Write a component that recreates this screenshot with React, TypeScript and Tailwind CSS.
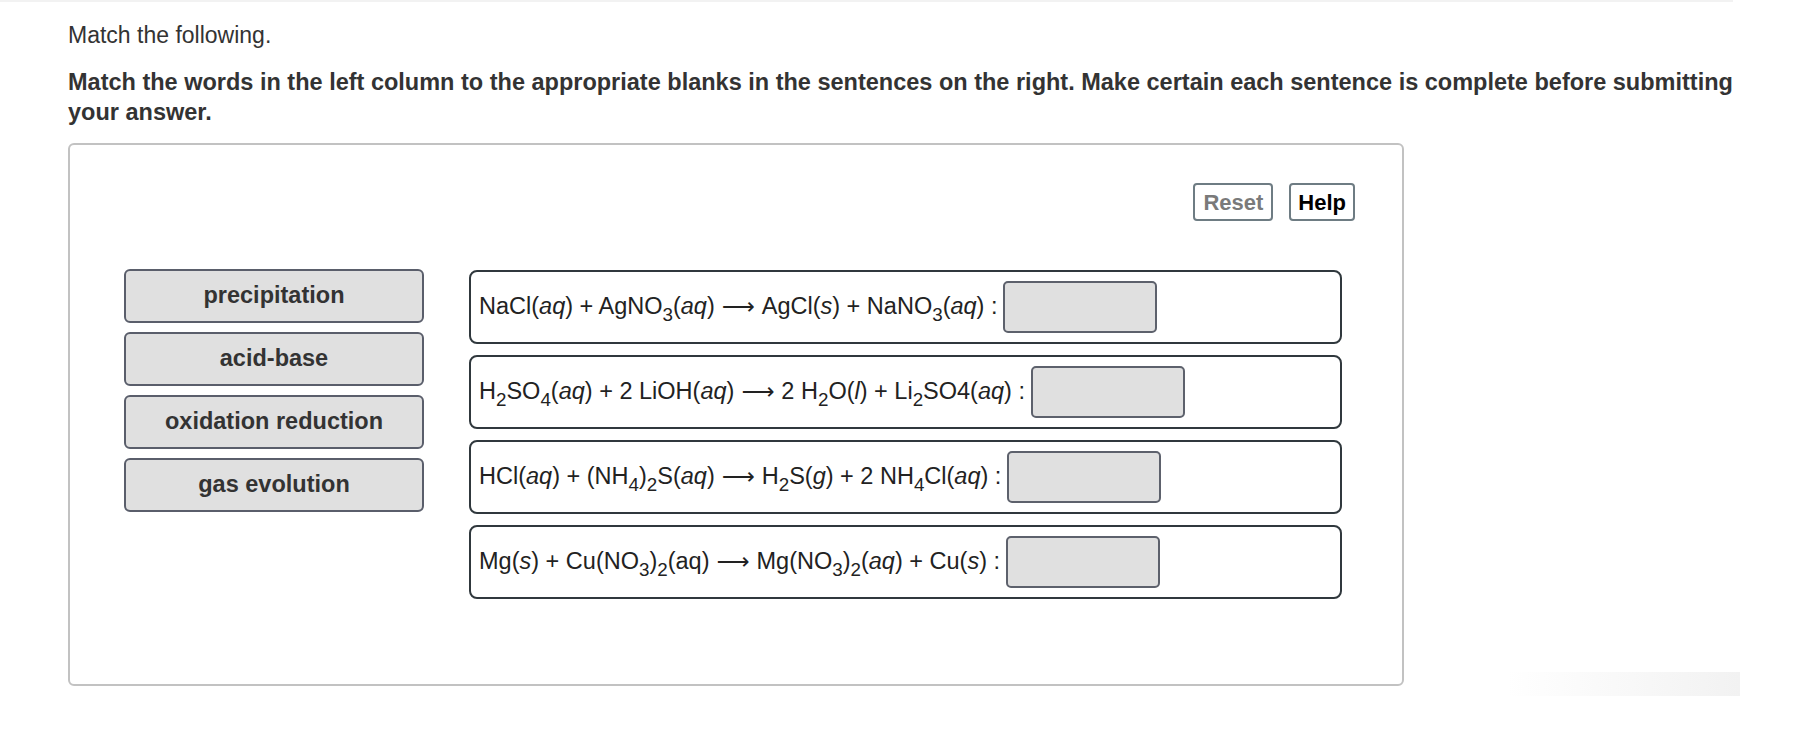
import React from 'react';

const terms = ['precipitation', 'acid-base', 'oxidation reduction', 'gas evolution'];

const Blank: React.FC = () => (
  <span className="inline-block ml-[6px] w-[154px] h-[52px] rounded-[5px] border-2 border-[#5d616c] bg-[#e0e0e0] align-middle" />
);

const Sentence: React.FC<{ children: React.ReactNode }> = ({ children }) => (
  <div className="h-[74px] rounded-[8px] border-2 border-[#30383d] bg-white pl-[8px] flex items-center text-[23.5px] text-[#222] whitespace-nowrap">
    <span>{children}</span>
    <Blank />
  </div>
);

const Sub: React.FC<{ children: React.ReactNode }> = ({ children }) => (
  <sub className="text-[0.8em] bottom-[-0.35em]">{children}</sub>
);

const Arrow = () => <span className="mx-[7px] font-['DejaVu_Sans',sans-serif] text-[23px]">⟶</span>;

export default function App() {
  return (
    <div className="min-h-[740px] bg-white font-['Liberation_Sans','Helvetica',sans-serif] text-[#333]">
      <div className="h-[2px] w-[1733px] bg-[#f2f2f2]" />
      <div className="pl-[68px] pr-[68px]">
        <p className="mt-[18px] text-[23px] leading-[30px]">Match the following.</p>
        <p className="mt-[17px] text-[23.5px] leading-[30px] font-bold">
          Match the words in the left column to the appropriate blanks in the sentences on the right. Make certain each sentence is complete before submitting your answer.
        </p>

        <div className="mt-4 flex items-start">
          <div className="w-[1336px] h-[543px] shrink-0 rounded-[6px] border-2 border-[#c2c2c2] pl-[54px] pr-[47px] pt-[38px]">
            <div className="flex justify-end gap-4">
              <button className="h-[38px] px-[8px] rounded-[4px] border-2 border-[#6e7c83] bg-white text-[22px] font-bold text-[#7a7a7a]">
                Reset
              </button>
              <button className="h-[38px] px-[7px] rounded-[4px] border-2 border-[#6e7c83] bg-white text-[22px] font-bold text-black">
                Help
              </button>
            </div>

            <div className="mt-[48px] flex items-start gap-[45px]">
              <div className="w-[300px] flex flex-col gap-[9px]">
                {terms.map((t) => (
                  <div
                    key={t}
                    className="h-[54px] rounded-[6px] border-2 border-[#5a5e6b] bg-[#e0e0e0] flex items-center justify-center text-[23.5px] font-bold text-[#333]"
                  >
                    {t}
                  </div>
                ))}
              </div>

              <div className="mt-px w-[873px] flex flex-col gap-[11px]">
                <Sentence>
                  NaCl(<i>aq</i>) + AgNO<Sub>3</Sub>(<i>aq</i>)<Arrow />AgCl(<i>s</i>) + NaNO<Sub>3</Sub>(<i>aq</i>) :
                </Sentence>
                <Sentence>
                  H<Sub>2</Sub>SO<Sub>4</Sub>(<i>aq</i>) + 2 LiOH(<i>aq</i>)<Arrow />2 H<Sub>2</Sub>O(<i>l</i>) + Li<Sub>2</Sub>SO4(<i>aq</i>) :
                </Sentence>
                <Sentence>
                  HCl(<i>aq</i>) + (NH<Sub>4</Sub>)<Sub>2</Sub>S(<i>aq</i>)<Arrow />H<Sub>2</Sub>S(<i>g</i>) + 2 NH<Sub>4</Sub>Cl(<i>aq</i>) :
                </Sentence>
                <Sentence>
                  Mg(<i>s</i>) + Cu(NO<Sub>3</Sub>)<Sub>2</Sub>(aq)<Arrow />Mg(NO<Sub>3</Sub>)<Sub>2</Sub>(<i>aq</i>) + Cu(<i>s</i>) :
                </Sentence>
              </div>
            </div>
          </div>

          <div className="ml-[103px] mt-[529px] w-[295px] h-[24px] bg-gradient-to-r from-white to-[#f2f2f2]" />
        </div>
      </div>
    </div>
  );
}
